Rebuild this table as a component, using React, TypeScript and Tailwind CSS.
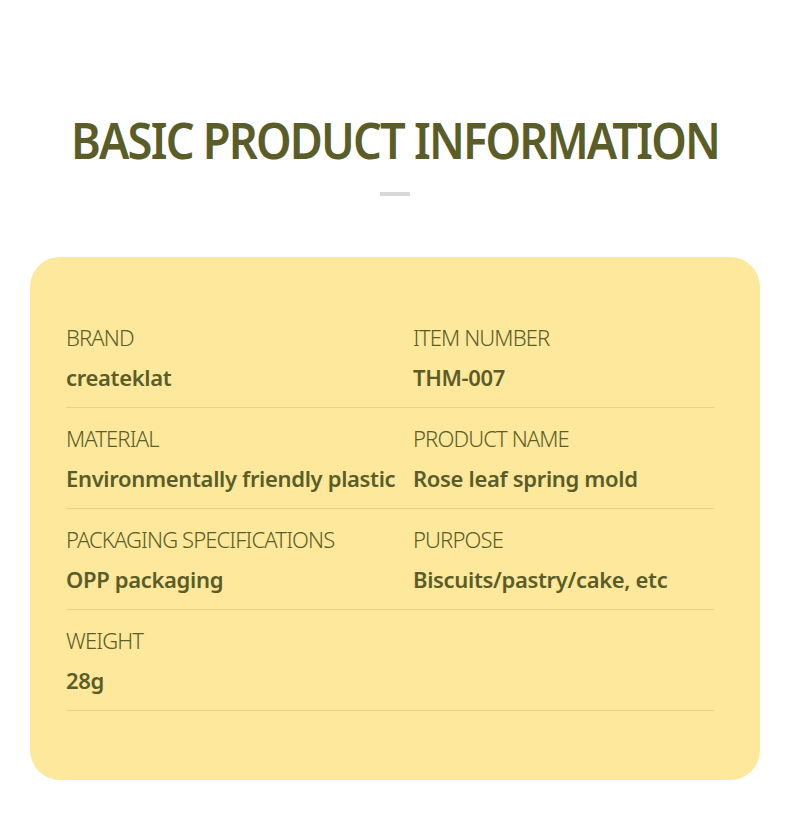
import React from "react";

type Spec = { label: string; value: string };

const rows: [Spec, Spec | null][] = [
  [
    { label: "BRAND", value: "createklat" },
    { label: "ITEM NUMBER", value: "THM-007" },
  ],
  [
    { label: "MATERIAL", value: "Environmentally friendly plastic" },
    { label: "PRODUCT NAME", value: "Rose leaf spring mold" },
  ],
  [
    { label: "PACKAGING SPECIFICATIONS", value: "OPP packaging" },
    { label: "PURPOSE", value: "Biscuits/pastry/cake, etc" },
  ],
  [{ label: "WEIGHT", value: "28g" }, null],
];

const Cell: React.FC<{ spec: Spec | null }> = ({ spec }) => (
  <div className="flex flex-col pt-[17px]">
    {spec && (
      <>
        <span className="text-[22px] leading-[26px] font-light tracking-[-0.04em] text-[#5b5d28]">
          {spec.label}
        </span>
        <span className="mt-[14px] text-[22px] leading-[26px] font-semibold tracking-[-0.015em] text-[#5b5d28]">
          {spec.value}
        </span>
      </>
    )}
  </div>
);

export default function App() {
  return (
    <div
      className="w-[790px] h-[827px] bg-white flex flex-col items-center"
      style={{ fontFamily: '"Noto Sans", "Open Sans", sans-serif' }}
    >
      <h1 className="mt-[112px] text-[50px] leading-[56px] font-semibold tracking-[-0.04em] text-[#5b5d28] whitespace-nowrap scale-x-[0.905]">
        BASIC PRODUCT INFORMATION
      </h1>
      <div className="mt-[24px] w-[30px] h-[4px] bg-[#d9d9d9]" />
      <div className="mt-[61px] w-[730px] h-[523px] rounded-[30px] bg-[#fde89c] pt-[50px] pl-[36px] pr-[46px]">
        {rows.map(([a, b], i) => (
          <div
            key={i}
            className="grid grid-cols-[347px_1fr] h-[101px] border-b border-[#e8d188]"
          >
            <Cell spec={a} />
            <Cell spec={b} />
          </div>
        ))}
      </div>
    </div>
  );
}
